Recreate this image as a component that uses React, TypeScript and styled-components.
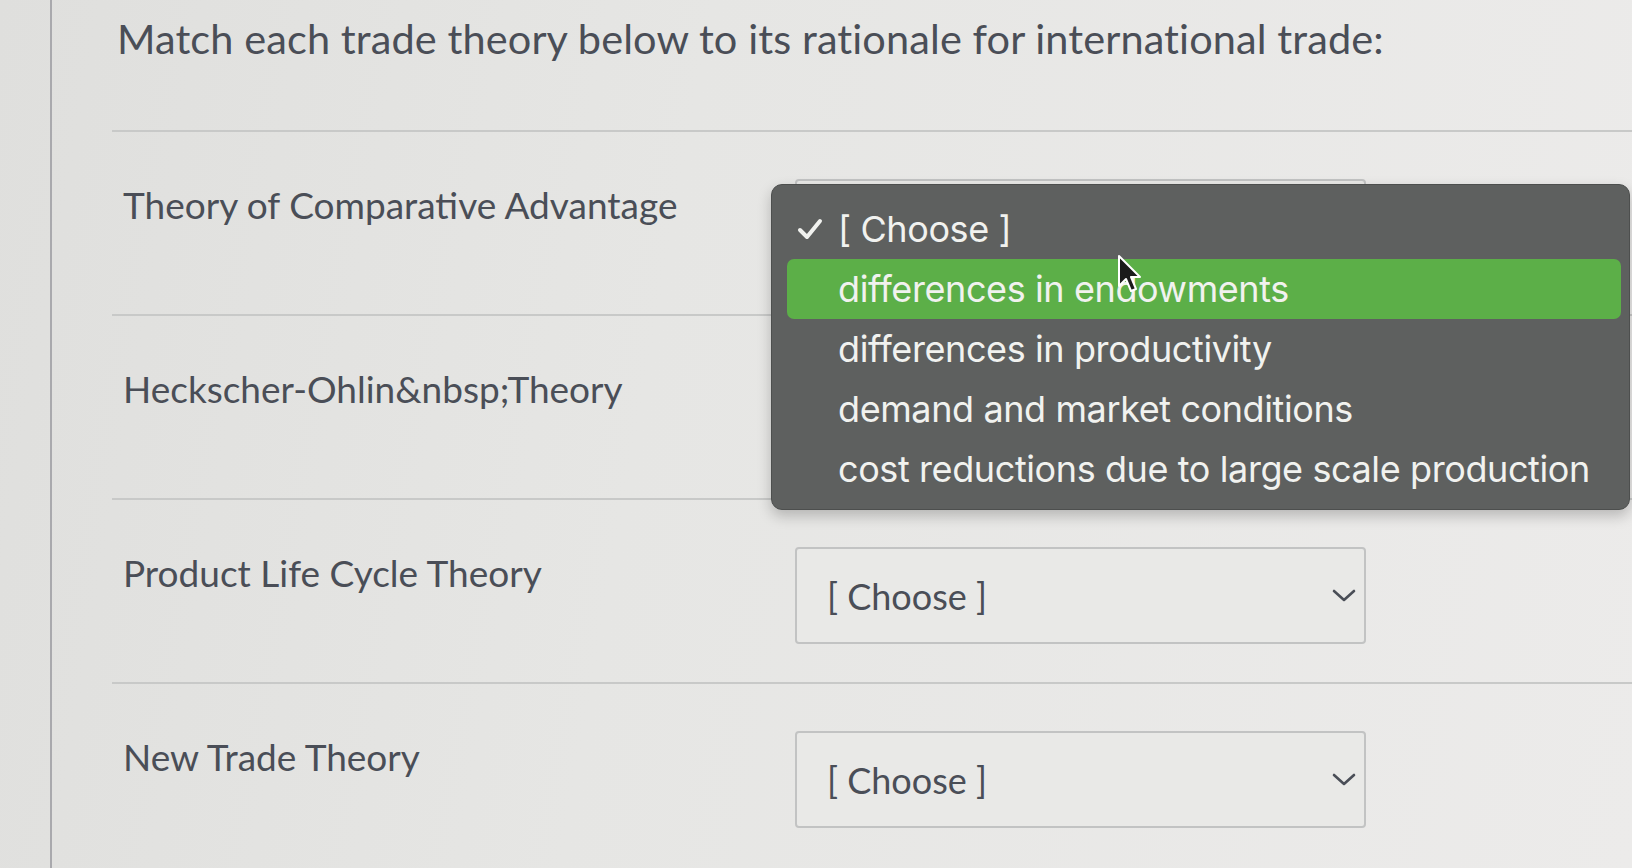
import React from "react";
import styled, { createGlobalStyle } from "styled-components";

const Global = createGlobalStyle`
  html, body { margin: 0; padding: 0; }
  body {
    background: #e4e4e2;
    font-family: Lato, "Open Sans", sans-serif;
    overflow: hidden;
  }
`;

const Page = styled.div`
  position: relative;
  display: flex;
  width: 1632px;
  height: 868px;
  overflow: hidden;
  background: linear-gradient(100deg, #dfdfdd 0%, #e6e6e4 40%, #ecebea 100%);
`;

const Gutter = styled.div`
  width: 50px;
  flex: none;
  border-right: 2px solid #a9a9ad;
`;

const Content = styled.main`
  flex: 1;
  display: flex;
  flex-direction: column;
  padding-left: 60px;
`;

const Title = styled.h1`
  margin: 0;
  height: 132px;
  padding: 13px 0 0 5px;
  box-sizing: border-box;
  font-size: 41.5px;
  font-weight: 400;
  line-height: 50px;
  color: #4a4e57;
  letter-spacing: 0.1px;
  white-space: nowrap;
  border-bottom: 2px solid #c8c9c8;
`;

const Row = styled.section<{ $last?: boolean }>`
  display: flex;
  align-items: flex-start;
  height: 184px;
  box-sizing: border-box;
  padding-top: 47px;
  border-bottom: ${(p) => (p.$last ? "none" : "2px solid #c8c9c8")};
`;

const Label = styled.div`
  width: 683px;
  flex: none;
  padding: 4px 0 0 11px;
  box-sizing: border-box;
  font-size: 37px;
  line-height: 44px;
  color: #4a4e57;
`;

const SelectWrap = styled.div`
  position: relative;
  width: 571px;
  height: 97px;
`;

const SelectBox = styled.div`
  display: flex;
  align-items: center;
  justify-content: space-between;
  height: 100%;
  box-sizing: border-box;
  padding: 0 8px 0 30px;
  border: 2px solid #c2c3c3;
  border-radius: 4px;
  background: #e9e9e7;
  font-size: 36px;
  color: #4a4e57;
`;

const Chevron = () => (
  <svg width="24" height="14" viewBox="0 0 24 14" fill="none">
    <path d="M2 2 L12 11 L22 2" stroke="#4a4e57" strokeWidth="2.6" strokeLinecap="round" strokeLinejoin="round" />
  </svg>
);

const Menu = styled.ul`
  position: absolute;
  top: 5px;
  left: -24px;
  width: 859px;
  margin: 0;
  padding: 14px 8px 10px 15px;
  box-sizing: border-box;
  list-style: none;
  background: #5e605f;
  border: 1px solid #4d4f4e;
  border-radius: 11px;
  box-shadow: 0 6px 14px rgba(0, 0, 0, 0.22);
  font-family: Inter, "Open Sans", sans-serif;
  z-index: 5;
`;

const Item = styled.li<{ $active?: boolean }>`
  display: flex;
  align-items: center;
  height: 60px;
  padding-left: 10px;
  border-radius: 7px;
  background: ${(p) => (p.$active ? "#5caf48" : "transparent")};
  color: #f1f2ef;
  font-size: 36px;
  font-weight: 400;
  letter-spacing: -0.4px;
  white-space: nowrap;
`;

const Check = styled.span`
  width: 41px;
  flex: none;
  display: flex;
  align-items: center;
`;

const CheckIcon = () => (
  <svg width="26" height="22" viewBox="0 0 26 22" fill="none">
    <path d="M3 12 L10 19 L23 3" stroke="#f1f2ef" strokeWidth="4" strokeLinecap="round" strokeLinejoin="round" />
  </svg>
);

const Cursor = styled.svg`
  position: absolute;
  left: 1117px;
  top: 254px;
  z-index: 6;
`;

const options = [
  "differences in endowments",
  "differences in productivity",
  "demand and market conditions",
  "cost reductions due to large scale production",
];

const rows = [
  "Theory of Comparative Advantage",
  "Heckscher-Ohlin&nbsp;Theory",
  "Product Life Cycle Theory",
  "New Trade Theory",
];

export default function App() {
  return (
    <>
      <Global />
      <Page>
        <Gutter />
        <Content>
          <Title>Match each trade theory below to its rationale for international trade:</Title>
          {rows.map((r, i) => (
            <Row key={r} $last={i === rows.length - 1}>
              <Label>{r}</Label>
              <SelectWrap>
                <SelectBox>
                  <span>{i < 2 ? "" : "[ Choose ]"}</span>
                  <Chevron />
                </SelectBox>
                {i === 0 && (
                  <Menu>
                    <Item>
                      <Check>
                        <CheckIcon />
                      </Check>
                      [ Choose ]
                    </Item>
                    {options.map((o, j) => (
                      <Item key={o} $active={j === 0}>
                        <Check />
                        {o}
                      </Item>
                    ))}
                  </Menu>
                )}
              </SelectWrap>
            </Row>
          ))}
        </Content>
        <Cursor width="26" height="40" viewBox="0 0 26 40">
          <path d="M2 2 L2 32 L9 25 L14 37 L19 35 L14 23 L23 23 Z" fill="#1b1b1b" stroke="#ffffff" strokeWidth="2" strokeLinejoin="round" />
        </Cursor>
      </Page>
    </>
  );
}
